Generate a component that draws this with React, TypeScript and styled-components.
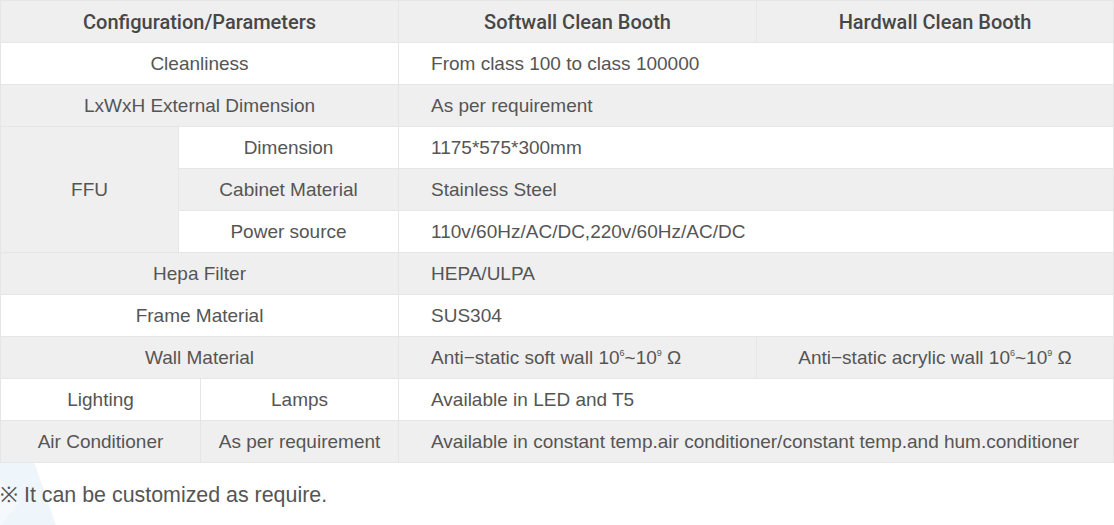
import styled, { createGlobalStyle } from 'styled-components';

const GlobalStyle = createGlobalStyle`
  html, body {
    margin: 0;
    padding: 0;
    background: #ffffff;
  }
  body {
    font-family: 'Liberation Sans', Arial, sans-serif;
    color: #555555;
  }
`;

const Page = styled.div`
  position: relative;
  width: 1114px;
  height: 525px;
  overflow: hidden;
`;

const Decoration = styled.svg`
  position: absolute;
  left: 0;
  top: 462px;
  z-index: 0;
`;

const Content = styled.div`
  position: relative;
  z-index: 1;
`;

const SpecTable = styled.table`
  width: 1114px;
  border-collapse: collapse;
  table-layout: fixed;
  font-size: 19px;
`;

const Row = styled.tr<{ $shaded?: boolean }>`
  height: 42px;
  background: ${({ $shaded }) => ($shaded ? '#efefef' : '#ffffff')};
`;

const HeadCell = styled.th`
  border: 1px solid #e6e6e6;
  font-family: Roboto, 'Liberation Sans', Arial, sans-serif;
  font-weight: 500;
  font-size: 20px;
  color: #474747;
  text-align: center;
  padding: 0;
`;

const LabelCell = styled.td<{ $shaded?: boolean }>`
  border: 1px solid #e6e6e6;
  text-align: center;
  padding: 0;
  color: #555555;
  background: ${({ $shaded }) => ($shaded ? '#efefef' : 'transparent')};
`;

const ValueCell = styled.td<{ $center?: boolean }>`
  border: 1px solid #e6e6e6;
  text-align: ${({ $center }) => ($center ? 'center' : 'left')};
  padding: 0 0 0 ${({ $center }) => ($center ? '0' : '32px')};
  color: #555555;
  white-space: nowrap;
`;

const Sup = styled.sup`
  font-size: 9px;
  vertical-align: 8px;
  line-height: 0;
`;

const Note = styled.p`
  margin: 0;
  padding-top: 16px;
  font-size: 21.4px;
  color: #555555;
`;

type Simple = { label: string; value: string };

const topRows: Simple[] = [
  { label: 'Cleanliness', value: 'From class 100 to class 100000' },
  { label: 'LxWxH External Dimension', value: 'As per requirement' },
];

const ffuRows: Simple[] = [
  { label: 'Dimension', value: '1175*575*300mm' },
  { label: 'Cabinet Material', value: 'Stainless Steel' },
  { label: 'Power source', value: '110v/60Hz/AC/DC,220v/60Hz/AC/DC' },
];

const midRows: Simple[] = [
  { label: 'Hepa Filter', value: 'HEPA/ULPA' },
  { label: 'Frame Material', value: 'SUS304' },
];

const Ohm = ({ text }: { text: string }) => (
  <>
    {text} 10<Sup>6</Sup>~10<Sup>9</Sup> Ω
  </>
);

export default function App() {
  return (
    <Page>
      <GlobalStyle />
      <Decoration width="70" height="63" viewBox="0 0 70 63">
        <polygon points="0,0 34,0 56,63 0,63" fill="#eef6fb" />
        <polygon points="0,18 20,40 0,63" fill="#f5f9fc" />
      </Decoration>
      <Content>
        <SpecTable>
          <colgroup>
            <col style={{ width: 178 }} />
            <col style={{ width: 22 }} />
            <col style={{ width: 198 }} />
            <col style={{ width: 358 }} />
            <col />
          </colgroup>
          <tbody>
            <Row $shaded>
              <HeadCell colSpan={3}>Configuration/Parameters</HeadCell>
              <HeadCell>Softwall Clean Booth</HeadCell>
              <HeadCell>Hardwall Clean Booth</HeadCell>
            </Row>
            {topRows.map((r, i) => (
              <Row key={r.label} $shaded={i % 2 === 1}>
                <LabelCell colSpan={3}>{r.label}</LabelCell>
                <ValueCell colSpan={2}>{r.value}</ValueCell>
              </Row>
            ))}
            {ffuRows.map((r, i) => (
              <Row key={r.label} $shaded={i % 2 === 1}>
                {i === 0 && (
                  <LabelCell rowSpan={3} $shaded>
                    FFU
                  </LabelCell>
                )}
                <LabelCell colSpan={2}>{r.label}</LabelCell>
                <ValueCell colSpan={2}>{r.value}</ValueCell>
              </Row>
            ))}
            {midRows.map((r, i) => (
              <Row key={r.label} $shaded={i % 2 === 0}>
                <LabelCell colSpan={3}>{r.label}</LabelCell>
                <ValueCell colSpan={2}>{r.value}</ValueCell>
              </Row>
            ))}
            <Row $shaded>
              <LabelCell colSpan={3}>Wall Material</LabelCell>
              <ValueCell>
                <Ohm text="Anti−static soft wall" />
              </ValueCell>
              <ValueCell $center>
                <Ohm text="Anti−static acrylic wall" />
              </ValueCell>
            </Row>
            <Row>
              <LabelCell colSpan={2}>Lighting</LabelCell>
              <LabelCell>Lamps</LabelCell>
              <ValueCell colSpan={2}>Available in LED and T5</ValueCell>
            </Row>
            <Row $shaded>
              <LabelCell colSpan={2}>Air Conditioner</LabelCell>
              <LabelCell>As per requirement</LabelCell>
              <ValueCell colSpan={2}>
                Available in constant temp.air conditioner/constant temp.and hum.conditioner
              </ValueCell>
            </Row>
          </tbody>
        </SpecTable>
        <Note>※ It can be customized as require.</Note>
      </Content>
    </Page>
  );
}
